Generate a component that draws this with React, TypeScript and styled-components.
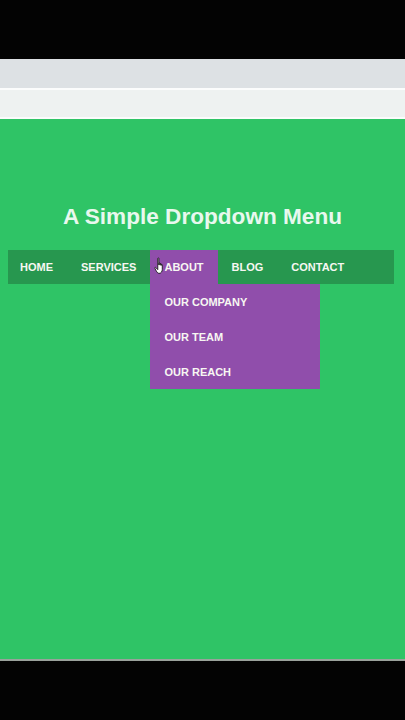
import React from 'react'
import styled, { createGlobalStyle } from 'styled-components'

const GlobalStyle = createGlobalStyle`
    html, body {
        margin: 0;
        padding: 0;
        background: #030303;
    }
    * {
        box-sizing: border-box;
    }
`

const navItems = ['HOME', 'SERVICES', 'ABOUT', 'BLOG', 'CONTACT']
const subItems = ['OUR COMPANY', 'OUR TEAM', 'OUR REACH']

const HandCursor = () => (
    <CursorSvg width="12" height="17" viewBox="0 0 8 14">
        <path
            d="M3 1.2c0-.6.9-.6.9 0v5.3l.1-1.2c0-.6.9-.6.9 0v1.4-.8c0-.6.9-.6.9 0v1.1-.5c0-.6.9-.6.9 0v3.8c0 1.6-1 3.2-2.6 3.2H4.2C3 13.5 2.4 12.6 1.7 11.4L.6 9.2c-.3-.6.4-1 .8-.5L3 10.4z"
            fill="#fff"
            stroke="#111"
            strokeWidth="0.7"
            strokeLinejoin="round"
        />
    </CursorSvg>
)

const App = () => {
    return (
        <>
            <GlobalStyle />
            <Screen>
                <Letterbox />
                <BrowserBar />
                <BrowserRule />
                <AddressBar />
                <BrowserRule />
                <Content>
                    <Title>A Simple Dropdown Menu</Title>
                    <Nav>
                        {navItems.map((item) => (
                            <NavItem key={item} $active={item === 'ABOUT'}>
                                {item}
                                {item === 'ABOUT' && (
                                    <>
                                        <HandCursor />
                                        <Dropdown>
                                            {subItems.map((sub) => (
                                                <DropdownItem key={sub}>{sub}</DropdownItem>
                                            ))}
                                        </Dropdown>
                                    </>
                                )}
                            </NavItem>
                        ))}
                    </Nav>
                </Content>
                <BottomRule />
                <Letterbox />
            </Screen>
        </>
    )
}

const Screen = styled.div`
    width: 405px;
    height: 720px;
    display: flex;
    flex-direction: column;
    background: #030303;
    font-family: 'Liberation Sans', Arial, sans-serif;
`

const Letterbox = styled.div`
    height: 59px;
    flex: none;
    background: #030303;
`

const BrowserBar = styled.div`
    height: 29px;
    flex: none;
    background: #dde1e4;
`

const BrowserRule = styled.div`
    height: 2px;
    flex: none;
    background: #fbfcfc;
`

const AddressBar = styled.div`
    height: 27px;
    flex: none;
    background: #eef2f1;
`

const Content = styled.div`
    flex: 1;
    background: #2fc466;
    padding-top: 84px;
    display: flex;
    flex-direction: column;
`

const BottomRule = styled.div`
    height: 2px;
    flex: none;
    background: #9aa29c;
`

const Title = styled.h1`
    margin: 0 0 19px;
    text-align: center;
    font-size: 22.6px;
    line-height: 28px;
    font-weight: 700;
    color: #e8f8ee;
`

const Nav = styled.ul`
    list-style: none;
    margin: 0 11px 0 8px;
    padding: 0;
    height: 34px;
    display: flex;
    background: #27974f;
`

const NavItem = styled.li<{ $active?: boolean }>`
    position: relative;
    display: flex;
    align-items: center;
    padding: 0 14px;
    font-size: 11px;
    font-weight: 700;
    color: #f7f7f2;
    background: ${(p) => (p.$active ? '#904eab' : 'transparent')};

    &:first-child {
        padding-left: 12px;
    }
`

const CursorSvg = styled.svg`
    position: absolute;
    left: 3px;
    top: 7px;
`

const Dropdown = styled.ul`
    position: absolute;
    top: 34px;
    left: 0;
    width: 170px;
    margin: 0;
    padding: 0;
    list-style: none;
    background: #904eab;
`

const DropdownItem = styled.li`
    height: 35px;
    display: flex;
    align-items: center;
    padding: 0 14px;
    font-size: 11px;
    font-weight: 700;
    color: #f7f7f2;
`

export default App
